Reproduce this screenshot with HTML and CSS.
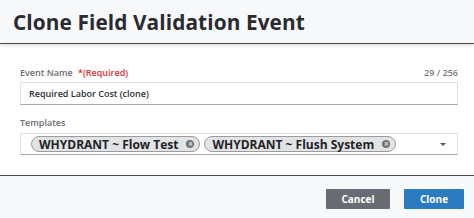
FILE: index.html
```html
<!DOCTYPE html>
<html lang="en">
<head>
    <meta charset="UTF-8">
    <title>Clone Field Validation Event</title>
    <link rel="stylesheet" href="styles.css">
</head>
<body>
    <div class="modal">
        <div class="modal-header">
            <h1>Clone Field Validation Event</h1>
        </div>
        <div class="modal-body">
            <div class="field-label">
                <span>Event Name <span class="required">*(Required)</span></span>
                <span class="counter">29 / 256</span>
            </div>
            <div class="text-input">Required Labor Cost (clone)</div>

            <div class="field-label field-label-second">
                <span>Templates</span>
            </div>
            <div class="select-input">
                <span class="chip">WHYDRANT ~ Flow Test <span class="chip-x">&times;</span></span>
                <span class="chip">WHYDRANT ~ Flush System <span class="chip-x">&times;</span></span>
                <span class="caret"></span>
            </div>
        </div>
        <div class="modal-footer">
            <button class="btn btn-cancel">Cancel</button>
            <button class="btn btn-clone">Clone</button>
        </div>
    </div>
</body>
</html>
```

FILE: styles.css
```css
body {
    margin: 0;
    font-family: 'Open Sans', 'Noto Sans', sans-serif;
    background: #ffffff;
    color: #2b2c30;
}
.modal {
    width: 474px;
    height: 218px;
    display: flex;
    flex-direction: column;
    overflow: hidden;
}
.modal-header {
    height: 43px;
    display: flex;
    align-items: center;
    padding: 0 13px;
    background: #f7f8fa;
    border-bottom: 1px solid #4a4b50;
    box-shadow: 0 2px 3px rgba(0, 0, 0, 0.12);
}
h1 {
    margin: 0;
    font-size: 20.8px;
    font-weight: 700;
    color: #2a2b30;
    letter-spacing: 0.1px;
}
.modal-body {
    flex: 1;
    padding: 22px 16px 0 20px;
}
.field-label {
    display: flex;
    justify-content: space-between;
    font-size: 9px;
    line-height: 14px;
    color: #6c6e72;
    font-weight: 600;
    margin-bottom: 2px;
}
.field-label-second {
    margin-top: 11px;
    margin-bottom: 3px;
}
.required {
    color: #d8323a;
    margin-left: 3px;
}
.counter {
    color: #75777b;
}
.text-input {
    height: 23px;
    line-height: 22px;
    padding: 0 8px;
    font-size: 9px;
    font-weight: 600;
    color: #2e2f33;
    border: 1px solid #e0e1e3;
    border-bottom: 1px solid #a8a9ad;
    box-sizing: border-box;
}
.select-input {
    height: 22px;
    box-sizing: border-box;
    display: flex;
    align-items: center;
    gap: 4px;
    padding: 0 10px;
    border: 1px solid #e0e1e3;
    border-bottom: 1px solid #a8a9ad;
}
.chip {
    display: inline-flex;
    align-items: center;
    height: 16px;
    padding: 0 5px 0 7px;
    border: 1px solid #9b9ca0;
    border-radius: 9px;
    background: #e2e3e5;
    font-size: 12px;
    font-weight: 700;
    color: #222327;
    box-sizing: border-box;
}
.chip-x {
    display: inline-flex;
    align-items: center;
    justify-content: center;
    width: 8px;
    height: 8px;
    margin-left: 8px;
    border-radius: 50%;
    background: #707176;
    color: #e2e3e5;
    font-size: 8px;
    line-height: 8px;
}
.caret {
    margin-left: auto;
    margin-right: 1px;
    width: 0;
    height: 0;
    border-left: 3px solid transparent;
    border-right: 3px solid transparent;
    border-top: 3px solid #55565a;
}
.modal-footer {
    height: 43px;
    display: flex;
    justify-content: flex-end;
    align-items: flex-start;
    gap: 14px;
    padding: 13px 10px 0 0;
    box-sizing: border-box;
    background: #f7f8fa;
    border-top: 1px solid #4a4b50;
}
.btn {
    height: 20px;
    border: none;
    border-radius: 1px;
    color: #ffffff;
    font-family: 'Open Sans', sans-serif;
    font-size: 10px;
    font-weight: 700;
    padding: 0;
    cursor: pointer;
}
.btn-cancel {
    width: 64px;
    background: #696b72;
}
.btn-clone {
    width: 60px;
    background: #2a7bc0;
}
```
